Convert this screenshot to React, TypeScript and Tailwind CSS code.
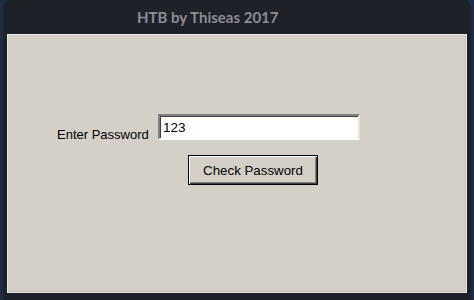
const sans = { fontFamily: '"Liberation Sans", Arial, sans-serif' };
const title = { fontFamily: 'Lato, "Noto Sans", sans-serif' };

export default function App() {
  return (
    <div className="w-[474px] h-[300px] bg-[#1b2c45] flex overflow-hidden">
      <div className="flex-1 ml-[3px] mr-[3px] bg-[#1f2128] rounded-t-[7px] flex flex-col">
        <div
          className="h-[34px] shrink-0 flex items-center pl-[134px] pt-[1px] text-[15px] font-bold text-[#8a8d95]"
          style={title}
        >
          HTB by Thiseas 2017
        </div>
        <div
          className="flex-1 ml-[4px] mr-[4px] mb-[7px] bg-[#d4d0c8] border border-[#e9e7e2] shadow-[inset_0_-1px_0_#bdb9b1,inset_-1px_0_0_#c9c5bd] flex flex-col"
          style={sans}
        >
          <div className="flex items-start h-[26px] mt-[79px] pl-[49px]">
            <span className="w-[101px] mt-[13px] text-[13px] leading-[15px] text-black">
              Enter Password
            </span>
            <div className="w-[202px] h-[26px] bg-white border-2 border-t-[#808080] border-l-[#808080] border-b-white border-r-[#e4e2dd] shadow-[inset_1px_1px_0_#404040] pl-[3px] pt-[4px] text-[13.5px] leading-[15px] text-black">
              123
            </div>
          </div>
          <div className="pl-[180px] mt-[15px]">
            <button className="w-[130px] h-[30px] bg-[#d4d0c8] border border-black shadow-[inset_1px_1px_0_#ffffff,inset_-1px_-1px_0_#404040,inset_-2px_-2px_0_#808080] text-[13.3px] leading-[15px] text-black flex items-center justify-center">
              Check Password
            </button>
          </div>
        </div>
      </div>
    </div>
  );
}
